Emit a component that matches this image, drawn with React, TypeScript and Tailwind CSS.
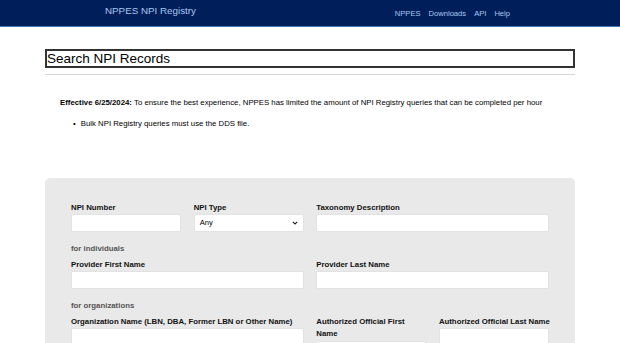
import React from "react";

const Label = ({ children }: { children: React.ReactNode }) => (
  <div className="text-[7.8px] font-bold text-[#111] leading-[10px] mb-[1px] whitespace-nowrap">{children}</div>
);

const Input = () => (
  <div className="h-[18px] bg-white rounded-[2px] border border-[#e2e2e2]" />
);

export default function App() {
  return (
    <div className="w-[620px] h-[343px] overflow-hidden bg-white" style={{ fontFamily: '"Liberation Sans", Arial, sans-serif' }}>
      <div className="h-[27px] bg-[#001e5a] border-b border-[#4a78b8] flex items-center">
        <div className="pl-[105px] text-[9.8px] text-[#a9c8f0] leading-none pb-[4px]">NPPES NPI Registry</div>
        <div className="ml-auto mr-[110px] flex gap-[8px] text-[7.6px] text-[#a9c8f0] leading-none pt-[1px]">
          <span>NPPES</span>
          <span>Downloads</span>
          <span>API</span>
          <span>Help</span>
        </div>
      </div>
      <div className="px-[45px] pt-[22px]">
        <div className="h-[19px] border-2 border-[#333] flex items-center text-[13.5px] text-black leading-none">
          Search NPI Records
        </div>
        <div className="mt-[6px] h-[1px] bg-[#d6d6d6]" />
        <div className="pl-[15px] pt-[24px] text-[7.8px] text-black leading-none">
          <span className="font-bold">Effective 6/25/2024:</span> To ensure the best experience, NPPES has limited the amount of NPI Registry queries that can be completed per hour
        </div>
        <div className="pl-[28px] pt-[13px] text-[7.8px] text-black leading-none flex items-center">
          <span className="mr-[5px]">•</span>Bulk NPI Registry queries must use the DDS file.
        </div>
        <div className="mt-[50px] bg-[#e9e9e9] rounded-[5px] px-[26px] pt-[25px] pb-[20px]">
          <div className="grid grid-cols-4 gap-x-[12.5px]">
            <div>
              <Label>NPI Number</Label>
              <Input />
            </div>
            <div>
              <Label>NPI Type</Label>
              <div className="h-[18px] bg-white rounded-[2px] border border-[#e2e2e2] flex items-center px-[5px] text-[7.6px] text-black">
                <span>Any</span>
                <svg className="ml-auto" width="6" height="4" viewBox="0 0 6 4" fill="none">
                  <path d="M0.8 0.8 L3 3 L5.2 0.8" stroke="#222" strokeWidth="1.1" />
                </svg>
              </div>
            </div>
            <div className="col-span-2">
              <Label>Taxonomy Description</Label>
              <Input />
            </div>
          </div>
          <div className="text-[7.8px] font-bold text-[#555] leading-[8px] mt-[13px] mb-[7px]">for individuals</div>
          <div className="grid grid-cols-4 gap-x-[12.5px]">
            <div className="col-span-2">
              <Label>Provider First Name</Label>
              <Input />
            </div>
            <div className="col-span-2">
              <Label>Provider Last Name</Label>
              <Input />
            </div>
          </div>
          <div className="text-[7.8px] font-bold text-[#555] leading-[8px] mt-[13px] mb-[7px]">for organizations</div>
          <div className="grid grid-cols-4 gap-x-[12.5px] items-start">
            <div className="col-span-2">
              <Label>Organization Name (LBN, DBA, Former LBN or Other Name)</Label>
              <Input />
            </div>
            <div>
              <div className="text-[7.8px] font-bold text-[#111] leading-[12px] -mt-[1px] mb-[1px]">Authorized Official First Name</div>
              <Input />
            </div>
            <div>
              <Label>Authorized Official Last Name</Label>
              <Input />
            </div>
          </div>
        </div>
      </div>
    </div>
  );
}
